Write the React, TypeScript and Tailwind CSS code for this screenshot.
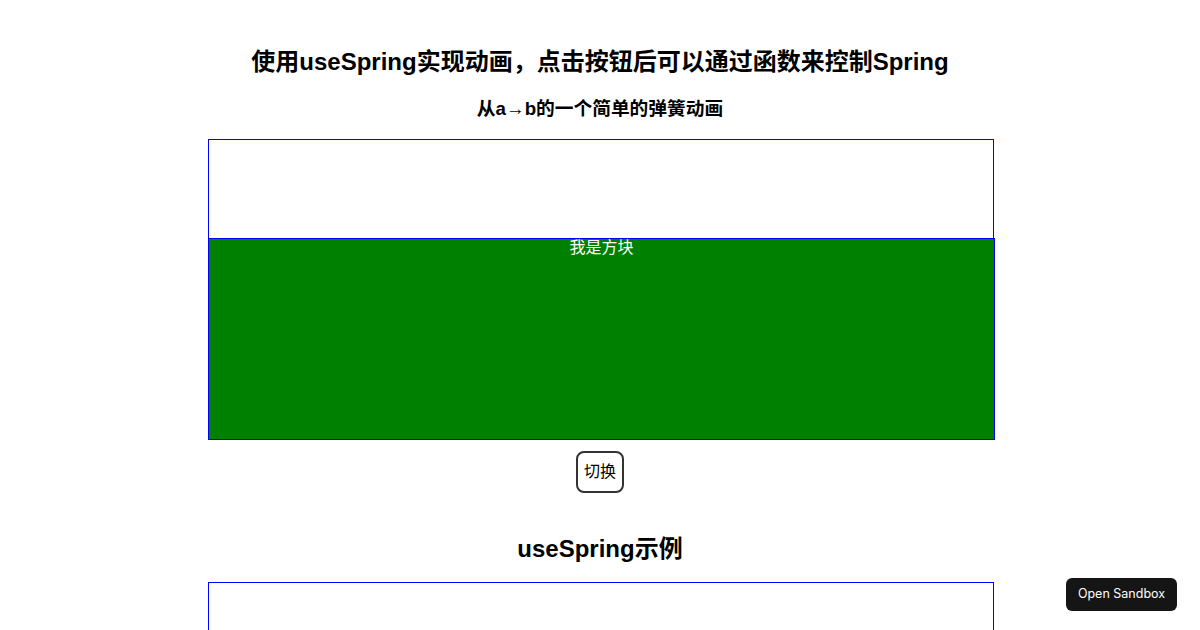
export default function App() {
  return (
    <div className="relative h-[630px] overflow-hidden bg-white font-['Liberation_Sans','Noto_Sans_CJK_SC',sans-serif] text-black">
      <div className="flex flex-col items-center pt-[48px]">
        <h2 className="text-[24px] leading-[28px] font-bold">
          使用useSpring实现动画，点击按钮后可以通过函数来控制Spring
        </h2>
        <h3 className="mt-[22px] text-[18.72px] leading-[22px] font-bold">
          从a→b的一个简单的弹簧动画
        </h3>

        <div className="mt-[19px] ml-[2px] flex h-[301px] w-[786px] flex-col justify-end border border-[#0000ff]">
          <div className="-mr-[2px] -ml-px -mb-px h-[202px] border border-[#0000ff] bg-[#008000] text-center text-[16px] leading-[18px] text-white">
            我是方块
          </div>
        </div>

        <button className="mt-[11px] rounded-lg border-2 border-[#333] px-[6px] py-[8px] text-[16px] leading-[22px]">
          切换
        </button>

        <h2 className="mt-[42px] text-[24px] leading-[28px] font-bold">useSpring示例</h2>
        <div className="mt-[19px] ml-[2px] h-[200px] w-[786px] border border-[#0000ff]"></div>
      </div>

      <div className="fixed right-[23px] bottom-[19px] flex h-[33px] w-[111px] items-center justify-center rounded-md bg-[#151515] font-['Inter',sans-serif] text-[12.5px] text-white">
        Open Sandbox
      </div>
    </div>
  );
}
